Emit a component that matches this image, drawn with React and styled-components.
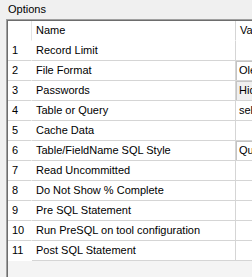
import React from "react";
import styled, { createGlobalStyle } from "styled-components";

const Global = createGlobalStyle`
  html, body { margin: 0; padding: 0; background: #f0f0f0; }
  body { font-family: "Liberation Sans", Arial, sans-serif; font-size: 11px; color: #000; }
`;

const Page = styled.div`
  width: 252px;
  height: 277px;
  overflow: hidden;
  display: flex;
  flex-direction: column;
  background: #f0f0f0;
`;

const Title = styled.div`
  height: 19px;
  line-height: 18px;
  padding-left: 8px;
  flex: none;
`;

const FrameOuter = styled.div`
  flex: 1;
  margin-left: 6px;
  width: 320px;
  border-top: 1px solid #a0a0a0;
  border-left: 1px solid #a0a0a0;
  display: flex;
`;

const FrameInner = styled.div`
  flex: 1;
  border-top: 1px solid #6d6d6d;
  border-left: 1px solid #6d6d6d;
  background: #f4f4f4;
`;

const Grid = styled.div`
  display: grid;
  grid-template-columns: 24px 204px 80px;
  grid-auto-rows: 20px;
  background: #fff;
`;

const Cell = styled.div`
  box-sizing: border-box;
  height: 20px;
  line-height: 19px;
  padding-left: 4px;
  white-space: nowrap;
  overflow: hidden;
  border-bottom: 1px solid ${(p) => (p.$noLine ? "transparent" : "#d5d5d5")};
  border-right: 1px solid ${(p) => (p.$sep ? p.$sep : "transparent")};
`;

const HeadCell = styled(Cell)`
  border-bottom-color: #fff;
`;

const NumCell = styled(Cell)`
  padding-left: 4px;
`;

const ValueCell = styled(Cell)`
  padding-left: 0;
`;

const ValueText = styled.div`
  padding-left: 3px;
`;

const Combo = styled.div`
  box-sizing: border-box;
  height: 19px;
  line-height: 17px;
  padding-left: 2px;
  border-top: 1px solid #c4c4c4;
  border-left: 1px solid #c4c4c4;
  background: ${(p) => (p.$shade ? "#f0f0f0" : "#fff")};
`;

const rows = [
  ["Record Limit", ""],
  ["File Format", "OleDB", "combo"],
  ["Passwords", "Hidden", "shade"],
  ["Table or Query", "select * from", "text"],
  ["Cache Data", ""],
  ["Table/FieldName SQL Style", "Quoted", "combo"],
  ["Read Uncommitted", ""],
  ["Do Not Show % Complete", ""],
  ["Pre SQL Statement", ""],
  ["Run PreSQL on tool configuration", ""],
  ["Post SQL Statement", ""],
];

export default function App() {
  return (
    <>
      <Global />
      <Page>
        <Title>Options</Title>
        <FrameOuter>
          <FrameInner>
            <Grid>
              <HeadCell $sep="#e3e3e3" />
              <HeadCell $sep="#d5d5d5">Name</HeadCell>
              <HeadCell>Value</HeadCell>
              {rows.map(([name, val, kind], i) => {
                const last = i === rows.length - 1;
                return (
                  <React.Fragment key={name}>
                    <NumCell $noLine={last}>{i + 1}</NumCell>
                    <Cell $sep="#d5d5d5">{name}</Cell>
                    <ValueCell>
                      {kind === "combo" || kind === "shade" ? (
                        <Combo $shade={kind === "shade"}>{val}</Combo>
                      ) : (
                        <ValueText>{val}</ValueText>
                      )}
                    </ValueCell>
                  </React.Fragment>
                );
              })}
            </Grid>
          </FrameInner>
        </FrameOuter>
      </Page>
    </>
  );
}
